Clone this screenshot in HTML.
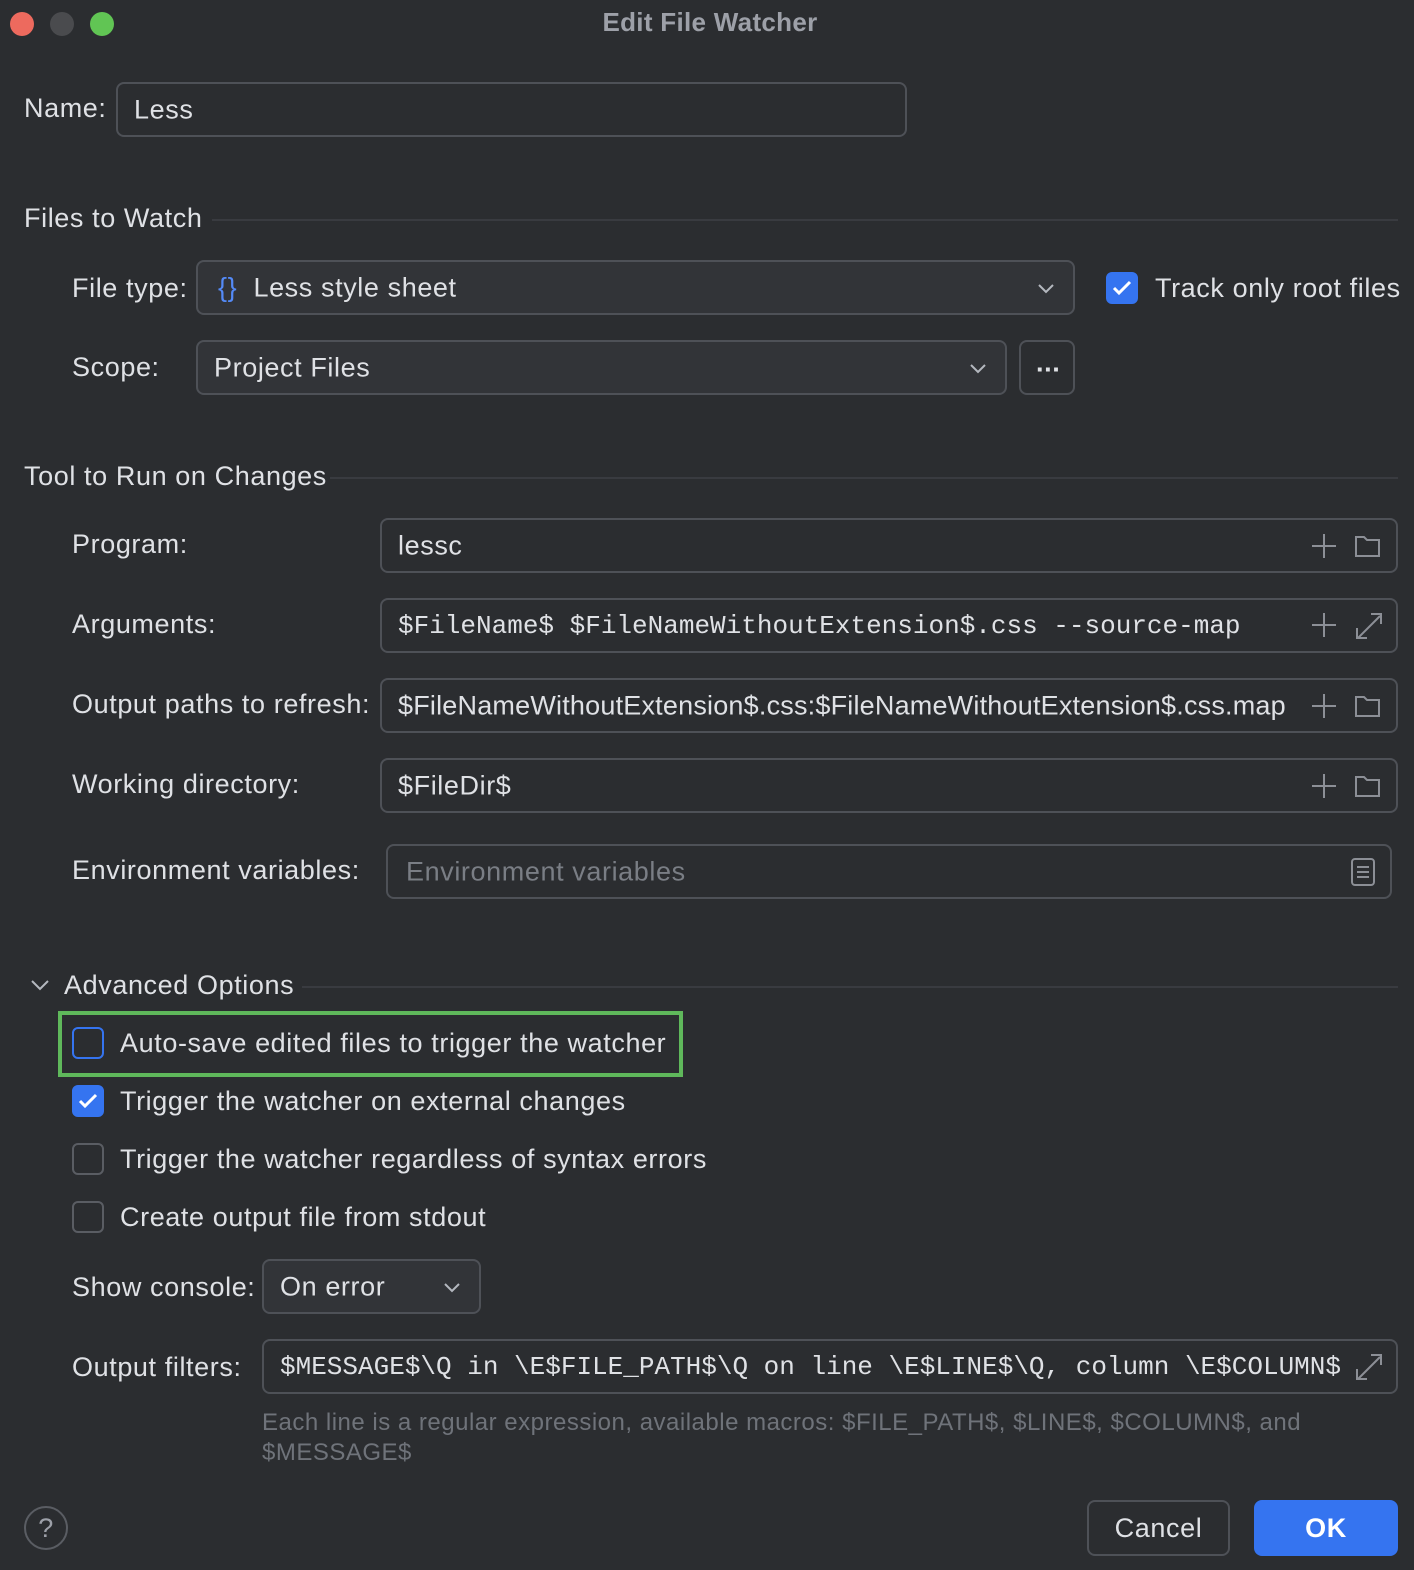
<!DOCTYPE html>
<html><head><meta charset="utf-8"><style>
*{box-sizing:border-box;margin:0;padding:0}
body{width:1414px;height:1570px;background:#2b2d30;font-family:"Liberation Sans",sans-serif;color:#dfe1e5;font-size:27px;letter-spacing:0.6px;position:relative;overflow:hidden}
.a{position:absolute;white-space:nowrap}
.f{position:absolute;border:2px solid #4e5157;border-radius:8px;height:55px}
.t{position:absolute;top:50%;transform:translateY(-50%);left:16px;white-space:nowrap}
.mono{font-family:"Liberation Mono",monospace;font-size:26px;letter-spacing:0}
.sep{position:absolute;height:2px;background:#393b40}
.cb{position:absolute;width:32px;height:32px;border:2px solid #5a5d63;border-radius:6px}
.cb.on{background:#3574f0;border-color:#3574f0}
.ic{position:absolute;top:50%;transform:translateY(-50%)}
</style></head><body>
<div class="a" style="left:10px;top:12px;width:24px;height:24px;border-radius:50%;background:#ed6a5e"></div>
<div class="a" style="left:50px;top:12px;width:24px;height:24px;border-radius:50%;background:#4a4b4e"></div>
<div class="a" style="left:90px;top:12px;width:24px;height:24px;border-radius:50%;background:#61c554"></div>
<div class="a" style="left:0;width:1414px;top:7px;text-align:center;font-weight:bold;color:#9da0a8;font-size:26px;letter-spacing:0.3px;padding-left:6px">Edit File Watcher</div>

<div class="a" style="left:24px;top:93px">Name:</div>
<div class="f" style="left:116px;top:82px;width:791px"><span class="t">Less</span></div>

<div class="a" style="left:24px;top:203px">Files to Watch</div>
<div class="sep" style="left:212px;top:219px;width:1186px"></div>

<div class="a" style="left:72px;top:273px">File type:</div>
<div class="f" style="left:196px;top:260px;width:879px;background:#323438"><span class="t" style="left:20px"><span style="color:#548af7">{}</span>&nbsp; Less style sheet</span>
<svg class="ic" style="right:18px" width="18" height="12" viewBox="0 0 18 12"><path d="M2 3l7 7 7-7" stroke="#b4b8bf" stroke-width="2" fill="none"/></svg></div>
<div class="cb on" style="left:1106px;top:272px"><svg width="28" height="28" viewBox="0 0 28 28"><path d="M6 14l5 5 11-11" stroke="#fff" stroke-width="3" fill="none"/></svg></div>
<div class="a" style="left:1155px;top:273px">Track only root files</div>

<div class="a" style="left:72px;top:352px">Scope:</div>
<div class="f" style="left:196px;top:340px;width:811px;background:#323438"><span class="t">Project Files</span>
<svg class="ic" style="right:18px" width="18" height="12" viewBox="0 0 18 12"><path d="M2 3l7 7 7-7" stroke="#b4b8bf" stroke-width="2" fill="none"/></svg></div>
<div class="f" style="left:1019px;top:340px;width:56px"><span class="t" style="left:15px;top:42%;font-weight:bold">...</span></div>

<div class="a" style="left:24px;top:461px">Tool to Run on Changes</div>
<div class="sep" style="left:330px;top:477px;width:1068px"></div>

<div class="a" style="left:72px;top:529px">Program:</div>
<div class="f" style="left:380px;top:518px;width:1018px"><span class="t">lessc</span>
<svg class="ic" style="right:14px" width="72" height="28" viewBox="0 0 72 28"><path d="M14 2v24M2 14h24" stroke="#8c8f96" stroke-width="2"/><path d="M46 5h8l3 3h12v16H46z" stroke="#8c8f96" stroke-width="2" fill="none"/></svg></div>

<div class="a" style="left:72px;top:609px">Arguments:</div>
<div class="f" style="left:380px;top:598px;width:1018px"><span class="t mono">$FileName$ $FileNameWithoutExtension$.css --source-map</span>
<svg class="ic" style="right:14px" width="72" height="30" viewBox="0 0 72 30"><path d="M14 2v24M2 14h24" stroke="#8c8f96" stroke-width="2"/><path d="M48 27l22-22M61 3h10v10M47 17v10h10" stroke="#8c8f96" stroke-width="2" fill="none"/></svg></div>

<div class="a" style="left:72px;top:689px">Output paths to refresh:</div>
<div class="f" style="left:380px;top:678px;width:1018px"><span class="t" style="letter-spacing:0.2px">$FileNameWithoutExtension$.css:$FileNameWithoutExtension$.css.map</span>
<svg class="ic" style="right:14px" width="72" height="28" viewBox="0 0 72 28"><path d="M14 2v24M2 14h24" stroke="#8c8f96" stroke-width="2"/><path d="M46 5h8l3 3h12v16H46z" stroke="#8c8f96" stroke-width="2" fill="none"/></svg></div>

<div class="a" style="left:72px;top:769px">Working directory:</div>
<div class="f" style="left:380px;top:758px;width:1018px"><span class="t">$FileDir$</span>
<svg class="ic" style="right:14px" width="72" height="28" viewBox="0 0 72 28"><path d="M14 2v24M2 14h24" stroke="#8c8f96" stroke-width="2"/><path d="M46 5h8l3 3h12v16H46z" stroke="#8c8f96" stroke-width="2" fill="none"/></svg></div>

<div class="a" style="left:72px;top:855px">Environment variables:</div>
<div class="f" style="left:386px;top:844px;width:1006px"><span class="t" style="left:18px;color:#7a7e85">Environment variables</span>
<svg class="ic" style="right:14px" width="26" height="30" viewBox="0 0 26 30"><rect x="2" y="2" width="22" height="26" rx="3" stroke="#8c8f96" stroke-width="2" fill="none"/><path d="M7 10h12M7 15h12M7 20h12" stroke="#8c8f96" stroke-width="2"/></svg></div>

<svg class="a" style="left:30px;top:978px" width="20" height="14" viewBox="0 0 20 14"><path d="M2 3l8 8 8-8" stroke="#b4b8bf" stroke-width="2" fill="none"/></svg>
<div class="a" style="left:64px;top:970px">Advanced Options</div>
<div class="sep" style="left:302px;top:986px;width:1096px"></div>

<div class="a" style="left:58px;top:1011px;width:625px;height:66px;border:4px solid #5fb85b"></div>
<div class="cb" style="left:72px;top:1027px;border-color:#3574f0"></div>
<div class="a" style="left:120px;top:1028px">Auto-save edited files to trigger the watcher</div>
<div class="cb on" style="left:72px;top:1085px"><svg width="28" height="28" viewBox="0 0 28 28"><path d="M6 14l5 5 11-11" stroke="#fff" stroke-width="3" fill="none"/></svg></div>
<div class="a" style="left:120px;top:1086px">Trigger the watcher on external changes</div>
<div class="cb" style="left:72px;top:1143px"></div>
<div class="a" style="left:120px;top:1144px">Trigger the watcher regardless of syntax errors</div>
<div class="cb" style="left:72px;top:1201px"></div>
<div class="a" style="left:120px;top:1202px">Create output file from stdout</div>

<div class="a" style="left:72px;top:1272px">Show console:</div>
<div class="f" style="left:262px;top:1259px;width:219px;background:#323438"><span class="t">On error</span>
<svg class="ic" style="right:18px" width="18" height="12" viewBox="0 0 18 12"><path d="M2 3l7 7 7-7" stroke="#b4b8bf" stroke-width="2" fill="none"/></svg></div>

<div class="a" style="left:72px;top:1352px">Output filters:</div>
<div class="f" style="left:262px;top:1339px;width:1136px"><span class="t mono">$MESSAGE$\Q in \E$FILE_PATH$\Q on line \E$LINE$\Q, column \E$COLUMN$</span>
<svg class="ic" style="right:12px" width="30" height="30" viewBox="0 0 30 30"><path d="M4 27l22-22M17 3h10v10M3 17v10h10" stroke="#8c8f96" stroke-width="2" fill="none"/></svg></div>
<div class="a" style="left:262px;top:1408px;color:#6f737a;font-size:24px;letter-spacing:0.5px;line-height:30px;white-space:normal;width:1100px">Each line is a regular expression, available macros: $FILE_PATH$, $LINE$, $COLUMN$, and $MESSAGE$</div>

<div class="a" style="left:24px;top:1506px;width:44px;height:44px;border:2px solid #5a5d63;border-radius:50%;text-align:center;line-height:40px;color:#9da0a8">?</div>
<div class="a" style="left:1087px;top:1500px;width:143px;height:56px;border:2px solid #4e5157;border-radius:8px;text-align:center;line-height:52px">Cancel</div>
<div class="a" style="left:1254px;top:1500px;width:144px;height:56px;background:#3574f0;border-radius:8px;text-align:center;line-height:56px;color:#fff;font-weight:bold">OK</div>
</body></html>
